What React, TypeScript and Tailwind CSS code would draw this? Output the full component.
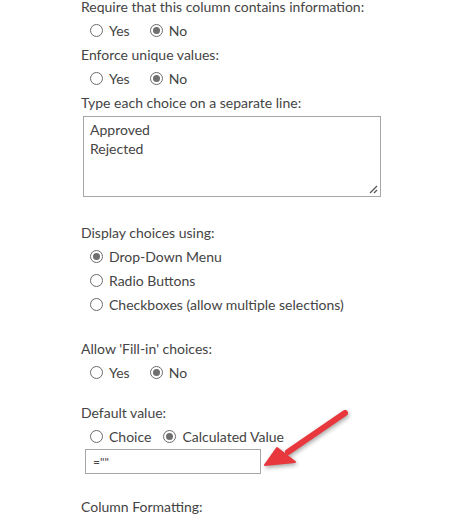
import React from "react"

function Radio({ checked }: { checked?: boolean }) {
  return (
    <span className="flex size-[13px] shrink-0 items-center justify-center rounded-full border border-[#6b6b6b] bg-white">
      {checked && <span className="size-[7px] rounded-full bg-[#6f6f6f]" />}
    </span>
  )
}

function Option({ label, checked, className = "" }: { label: string; checked?: boolean; className?: string }) {
  return (
    <span className={`flex items-center gap-[6px] ${className}`}>
      <Radio checked={checked} />
      <span>{label}</span>
    </span>
  )
}

function YesNo() {
  return (
    <div className="flex h-6 items-center pl-[9px]">
      <Option label="Yes" />
      <Option label="No" checked className="ml-[20px]" />
    </div>
  )
}

function Arrow() {
  return (
    <svg
      className="pointer-events-none absolute left-[258px] top-[402px]"
      width="100"
      height="75"
      viewBox="0 0 100 75"
      style={{ filter: "drop-shadow(1px 2px 2px rgba(0,0,0,0.35))" }}
    >
      <line x1="87" y1="11" x2="30" y2="50" stroke="#e8383d" strokeWidth="6" strokeLinecap="round" />
      <polygon points="7,63 19,46 37,60" fill="#e8383d" stroke="#e8383d" strokeWidth="2" strokeLinejoin="round" />
    </svg>
  )
}

export default function App() {
  return (
    <div className="relative h-[515px] w-[474px] overflow-hidden bg-white font-['Lato',sans-serif] text-[14px] text-[#444]">
      <div className="-mt-[6px] pl-[81px]">
        <div className="flex h-6 items-center">Require that this column contains information:</div>
        <YesNo />
        <div className="flex h-6 items-center">Enforce unique values:</div>
        <YesNo />
        <div className="flex h-6 items-center">Type each choice on a separate line:</div>
        <div className="relative ml-[2px] mt-[2px] h-[81px] w-[298px] border border-[#a6a6a6] px-[6px] pt-[3px] leading-[19px]">
          <div>Approved</div>
          <div>Rejected</div>
          <svg className="absolute bottom-[2px] right-[2px]" width="10" height="10" viewBox="0 0 10 10">
            <line x1="2" y1="9" x2="9" y2="2" stroke="#555" strokeWidth="1.2" />
            <line x1="6" y1="9" x2="9" y2="6" stroke="#555" strokeWidth="1.2" />
          </svg>
        </div>

        <div className="mt-[23px] flex h-6 items-center">Display choices using:</div>
        <div className="pl-[9px]">
          <Option label="Drop-Down Menu" checked className="h-6" />
          <Option label="Radio Buttons" className="h-6" />
          <Option label="Checkboxes (allow multiple selections)" className="h-6" />
        </div>

        <div className="mt-[20px] flex h-6 items-center">Allow 'Fill-in' choices:</div>
        <YesNo />

        <div className="mt-[16px] flex h-6 items-center">Default value:</div>
        <div className="flex h-6 items-center pl-[9px]">
          <Option label="Choice" />
          <Option label="Calculated Value" checked className="ml-[12px]" />
        </div>
        <div className="ml-[4px] mt-[1px] flex h-[25px] w-[176px] items-center border border-[#a6a6a6] px-[7px] text-[12px]">
          =""
        </div>

        <div className="mt-[20px] flex h-6 items-center">Column Formatting:</div>
      </div>
      <Arrow />
    </div>
  )
}
